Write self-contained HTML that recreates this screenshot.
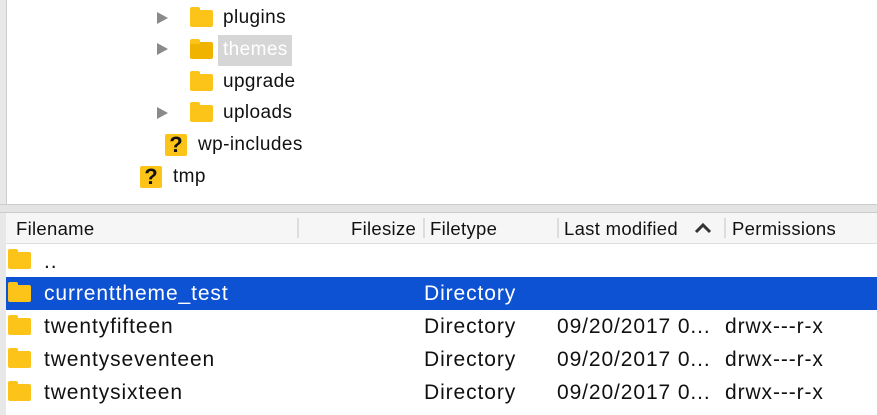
<!DOCTYPE html><html><head><style>
body{margin:0;width:877px;height:415px;overflow:hidden;background:#fff;font-family:"Liberation Sans",sans-serif;color:#111;position:relative}
.a{position:absolute;white-space:nowrap;font-size:19px;line-height:22px;letter-spacing:0.4px}
.r{font-size:21px;letter-spacing:0.9px}
.h{font-size:18.5px;letter-spacing:0.3px}
.f{position:absolute;width:23px;height:17px;background:#fcc419;border-radius:2px}
.f:before{content:"";position:absolute;left:0;top:-3px;width:10px;height:5px;background:#fcc419;border-radius:2px 2px 0 0}
.t{position:absolute;width:0;height:0;border-left:11px solid #8a8a8a;border-top:6px solid transparent;border-bottom:6px solid transparent}
.q{position:absolute;width:22px;height:22px;background:#fcc419;border-radius:2px;font-weight:bold;font-size:22px;line-height:22px;text-align:center;color:#111}
.sep{position:absolute;top:218px;width:2px;height:20px;background:#ddd}
</style></head><body>
<div style="position:absolute;left:0;top:0;width:6px;height:205px;background:#e8e8e8"></div>
<div style="position:absolute;left:6px;top:0;width:1px;height:205px;background:#ccc"></div>
<div class="t" style="left:157px;top:12px"></div><div class="f" style="left:190px;top:10px"></div><div class="a" style="left:223px;top:7px">plugins</div>
<div class="t" style="left:157px;top:43px"></div><div style="position:absolute;left:218px;top:35px;width:74px;height:31px;background:#d6d6d6"></div><div class="f" style="left:190px;top:42px;background:#f0b400"></div><div class="a" style="left:223px;top:39px;color:#fff">themes</div>
<div class="f" style="left:190px;top:74px"></div><div class="a" style="left:223px;top:71px">upgrade</div>
<div class="t" style="left:157px;top:107px"></div><div class="f" style="left:190px;top:105px"></div><div class="a" style="left:223px;top:102px">uploads</div>
<div class="q" style="left:165px;top:134px">?</div><div class="a" style="left:198px;top:134px">wp-includes</div>
<div class="q" style="left:140px;top:166px">?</div><div class="a" style="left:173px;top:166px">tmp</div>
<div style="position:absolute;left:0;top:204px;width:877px;height:9px;background:#e4e4e4;border-top:1px solid #ccc;border-bottom:1px solid #ccc;box-sizing:border-box"></div>
<div style="position:absolute;left:6px;top:213px;width:871px;height:30px;background:#f6f6f6;border-bottom:1px solid #ddd"></div>
<div style="position:absolute;left:0;top:213px;width:6px;height:202px;background:#e8e8e8"></div>
<div class="a h" style="left:16px;top:218px">Filename</div>
<div class="sep" style="left:297px"></div>
<div class="a h" style="left:351px;top:218px">Filesize</div>
<div class="sep" style="left:423px"></div>
<div class="a h" style="left:430px;top:218px">Filetype</div>
<div class="sep" style="left:557px"></div>
<div class="a h" style="left:564px;top:218px">Last modified</div>
<svg style="position:absolute;left:694px;top:222px" width="18" height="12"><path d="M2 10 L9 3 L16 10" stroke="#333" stroke-width="3" fill="none"/></svg>
<div class="sep" style="left:724px"></div>
<div class="a h" style="left:732px;top:218px">Permissions</div>
<div class="f" style="left:8px;top:252px"></div><div class="a r" style="left:44px;top:251px">..</div>
<div style="position:absolute;left:6px;top:277px;width:871px;height:33px;background:#0d52d3"></div>
<div class="f" style="left:8px;top:285px"></div><div class="a r" style="left:44px;top:283px;color:#fff">currenttheme_test</div><div class="a r" style="left:424px;top:283px;color:#fff">Directory</div>
<div class="f" style="left:8px;top:318px"></div><div class="a r" style="left:44px;top:316px">twentyfifteen</div><div class="a r" style="left:424px;top:316px">Directory</div><div class="a r" style="left:557px;top:316px">09/20/2017 0...</div><div class="a r" style="left:725px;top:316px">drwx---r-x</div>
<div class="f" style="left:8px;top:351px"></div><div class="a r" style="left:44px;top:349px">twentyseventeen</div><div class="a r" style="left:424px;top:349px">Directory</div><div class="a r" style="left:557px;top:349px">09/20/2017 0...</div><div class="a r" style="left:725px;top:349px">drwx---r-x</div>
<div class="f" style="left:8px;top:384px"></div><div class="a r" style="left:44px;top:382px">twentysixteen</div><div class="a r" style="left:424px;top:382px">Directory</div><div class="a r" style="left:557px;top:382px">09/20/2017 0...</div><div class="a r" style="left:725px;top:382px">drwx---r-x</div>
</body></html>
